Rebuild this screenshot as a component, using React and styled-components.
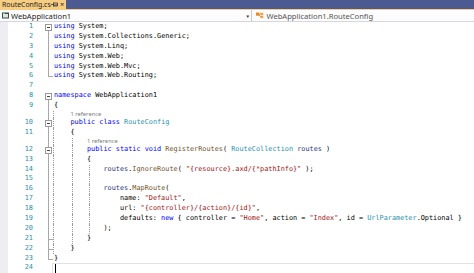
import React from "react";
import styled, { createGlobalStyle } from "styled-components";

const Global = createGlobalStyle`
  html, body { margin: 0; padding: 0; background: #ffffff; }
  body { width: 474px; height: 273px; overflow: hidden; }
`;

const Window = styled.div`
  width: 474px;
  height: 273px;
  display: flex;
  flex-direction: column;
  overflow: hidden;
  background: #ffffff;
`;

const TabBar = styled.div`
  height: 9px;
  flex: none;
  background: #4b5b91;
  display: flex;
  align-items: stretch;
`;

const Tab = styled.div`
  width: 66px;
  background: #f6cd82;
  display: flex;
  align-items: center;
  padding-left: 2px;
  box-sizing: border-box;
  font-family: "Noto Sans", "Open Sans", sans-serif;
  font-size: 6.9px;
  line-height: 9px;
  white-space: nowrap;
  color: #1e1e1e;
`;

const TabTitle = styled.span`
  flex: 1;
`;

const TabIcon = styled.span`
  width: 9px;
  display: flex;
  align-items: center;
  justify-content: center;
  font-size: 7.5px;
`;

const Accent = styled.div`
  height: 1px;
  flex: none;
  background: #f6cd82;
`;

const NavBar = styled.div`
  height: 11px;
  flex: none;
  display: flex;
  align-items: center;
  background: #fcfcfc;
  border-bottom: 1px solid #d6d6de;
  font-family: "Noto Sans", "Open Sans", sans-serif;
  font-size: 7.6px;
  white-space: nowrap;
  color: #1e1e1e;
`;

const Combo = styled.div`
  width: ${({ $w }) => $w}px;
  display: flex;
  align-items: center;
  gap: 2px;
  padding-left: 2px;
  box-sizing: border-box;
  color: ${({ $muted }) => ($muted ? "#555" : "#1e1e1e")};
`;

const ComboText = styled.span`
  flex: 1;
`;

const Arrow = styled.span`
  font-size: 4.5px;
  width: 6px;
  color: #333;
`;

const Divider = styled.div`
  width: 1px;
  height: 11px;
  background: #c8c8d0;
  margin-right: 2px;
`;

const Editor = styled.div`
  flex: 1;
  display: flex;
  flex-direction: column;
  font-family: "DejaVu Sans Mono", "Liberation Mono", monospace;
  font-size: 6.85px;
`;

const Row = styled.div`
  height: ${({ $lens }) => ($lens ? 7 : 9.9)}px;
  flex: none;
  display: flex;
  align-items: stretch;
`;

const Stripe = styled.div`
  width: 8px;
  background: #eeeef2;
`;

const LineNo = styled.div`
  width: 26px;
  text-align: right;
  color: #2b91af;
  line-height: 9.9px;
  box-sizing: border-box;
  padding-right: 1px;
`;

const Spacer = styled.div`
  width: 10px;
`;

const Fold = styled.div`
  width: 10px;
  position: relative;
`;

const FoldLine = styled.div`
  position: absolute;
  left: 4px;
  width: 1px;
  background: #a8a8a8;
  top: ${({ $from }) => $from};
  bottom: ${({ $to }) => $to};
`;

const FoldTick = styled.div`
  position: absolute;
  left: 4px;
  top: 5px;
  width: 5px;
  height: 1px;
  background: #a8a8a8;
`;

const FoldBox = styled.div`
  position: absolute;
  left: 1px;
  top: 2px;
  width: 5px;
  height: 5px;
  border: 1px solid #9a9a9a;
  background: #ffffff;
  &::after {
    content: "";
    position: absolute;
    left: 1px;
    right: 1px;
    top: 2px;
    height: 1px;
    background: #444;
  }
`;

const CHAR = 4.12;

const Code = styled.div`
  flex: 1;
  position: relative;
  white-space: pre;
  line-height: 9.9px;
  color: #000000;
  box-sizing: border-box;
  padding-left: ${({ $indent }) => $indent * CHAR}px;
  ${({ $current }) =>
    $current &&
    `
    border-top: 1px solid #e2e2e2;
    border-left: 1px solid #e2e2e2;
    margin-left: -2px;
  `}
`;

const Guide = styled.div`
  position: absolute;
  top: 0;
  bottom: 0;
  left: ${({ $x }) => $x}px;
  border-left: 1px dotted #9a9a9a;
`;

const Caret = styled.div`
  position: absolute;
  left: 2px;
  top: 0;
  width: 1px;
  height: 10px;
  background: #000;
`;

const Lens = styled.div`
  position: relative;
  flex: 1;
  font-family: "Noto Sans", "Open Sans", sans-serif;
  font-size: 5.8px;
  line-height: 7px;
  white-space: nowrap;
  color: #7a7a7a;
  padding-left: ${({ $indent }) => $indent * CHAR}px;
`;

const Tok = styled.span`
  color: ${({ $k }) =>
    ({
      kw: "#0000ff",
      type: "#2b91af",
      str: "#a31515",
      method: "#74531f",
      param: "#1f377f",
      plain: "#000000",
    })[$k]};
`;

const k = (t) => [t, "kw"];
const t = (s) => [s, "type"];
const s = (x) => [x, "str"];
const m = (x) => [x, "method"];
const p = (x) => [x, "param"];
const _ = (x) => [x, "plain"];

const rows = [
  { n: 1, fold: "boxdown", code: [k("using"), _(" System;")] },
  { n: 2, fold: "line", code: [k("using"), _(" System.Collections.Generic;")] },
  { n: 3, fold: "line", code: [k("using"), _(" System.Linq;")] },
  { n: 4, fold: "line", code: [k("using"), _(" System.Web;")] },
  { n: 5, fold: "line", code: [k("using"), _(" System.Web.Mvc;")] },
  { n: 6, fold: "endstop", code: [k("using"), _(" System.Web.Routing;")] },
  { n: 7, fold: "none", code: [] },
  { n: 8, fold: "boxdown", code: [k("namespace"), _(" WebApplication1")] },
  { n: 9, fold: "line", code: [_("{")] },
  { lens: 4, fold: "line", guides: [0] },
  { n: 10, fold: "box", guides: [0], indent: 4, code: [k("public"), _(" "), k("class"), _(" "), t("RouteConfig")] },
  { n: 11, fold: "line", guides: [0], indent: 4, code: [_("{")] },
  { lens: 8, fold: "line", guides: [0, 4] },
  {
    n: 12,
    fold: "box",
    guides: [0, 4],
    indent: 8,
    code: [
      k("public"),
      _(" "),
      k("static"),
      _(" "),
      k("void"),
      _(" "),
      m("RegisterRoutes"),
      _("( "),
      t("RouteCollection"),
      _(" "),
      p("routes"),
      _(" )"),
    ],
  },
  { n: 13, fold: "line", guides: [0, 4], indent: 8, code: [_("{")] },
  {
    n: 14,
    fold: "line",
    guides: [0, 4, 8],
    indent: 12,
    code: [p("routes"), _("."), m("IgnoreRoute"), _("( "), s('"{resource}.axd/{*pathInfo}"'), _(" );")],
  },
  { n: 15, fold: "line", guides: [0, 4, 8], code: [] },
  { n: 16, fold: "line", guides: [0, 4, 8], indent: 12, code: [p("routes"), _("."), m("MapRoute"), _("(")] },
  { n: 17, fold: "line", guides: [0, 4, 8], indent: 16, code: [_("name: "), s('"Default"'), _(",")] },
  { n: 18, fold: "line", guides: [0, 4, 8], indent: 16, code: [_("url: "), s('"{controller}/{action}/{id}"'), _(",")] },
  {
    n: 19,
    fold: "line",
    guides: [0, 4, 8],
    indent: 16,
    code: [
      _("defaults: "),
      k("new"),
      _(" { controller = "),
      s('"Home"'),
      _(", action = "),
      s('"Index"'),
      _(", id = "),
      t("UrlParameter"),
      _(".Optional }"),
    ],
  },
  { n: 20, fold: "line", guides: [0, 4, 8], indent: 12, code: [_(");")] },
  { n: 21, fold: "end", guides: [0, 4], indent: 8, code: [_("}")] },
  { n: 22, fold: "end", guides: [0], indent: 4, code: [_("}")] },
  { n: 23, fold: "endstop", code: [_("}")] },
  { n: 24, fold: "none", code: [], current: true },
];

const FoldMark = ({ kind }) => {
  switch (kind) {
    case "boxdown":
      return (
        <>
          <FoldLine $from="8px" $to="0" />
          <FoldBox />
        </>
      );
    case "box":
      return (
        <>
          <FoldLine $from="0" $to="0" />
          <FoldBox />
        </>
      );
    case "line":
      return <FoldLine $from="0" $to="0" />;
    case "end":
      return (
        <>
          <FoldLine $from="0" $to="0" />
          <FoldTick />
        </>
      );
    case "endstop":
      return (
        <>
          <FoldLine $from="0" $to="4px" />
          <FoldTick />
        </>
      );
    default:
      return null;
  }
};

// guide x relative to the code column's left edge (not the padded text)
const guideX = (col) => (col === 0 ? -1.5 : col * CHAR + 2);

const PinIcon = () => (
  <svg width="7" height="5" viewBox="0 0 7 5">
    <path d="M0 2.5h2.5M2.5 0.5v4M2.5 1h4v3h-4M2.5 3h4" stroke="#333" strokeWidth="0.8" fill="none" />
  </svg>
);

const ProjectIcon = () => (
  <svg width="7" height="7" viewBox="0 0 7 7">
    <rect x="0" y="0.5" width="7" height="6" fill="#3c4b4b" />
    <rect x="1" y="2" width="5" height="3.5" fill="#d9e8e4" />
    <rect x="1" y="1" width="2" height="1" fill="#7fbf7f" />
  </svg>
);

const ClassIcon = () => (
  <svg width="8" height="7" viewBox="0 0 8 7">
    <path d="M2 2L5 2M2 2L5 5" stroke="#a06020" strokeWidth="0.7" />
    <rect x="0" y="0.5" width="3.2" height="3.2" fill="#e68a1f" />
    <rect x="4.5" y="0.8" width="2.8" height="2.4" fill="#f0a040" />
    <rect x="4.5" y="3.8" width="2.8" height="2.4" fill="#f0a040" />
  </svg>
);

export default function App() {
  return (
    <Window>
      <Global />
      <TabBar>
        <Tab>
          <TabTitle>RouteConfig.cs</TabTitle>
          <TabIcon>
            <PinIcon />
          </TabIcon>
          <TabIcon>×</TabIcon>
        </Tab>
      </TabBar>
      <Accent />
      <NavBar>
        <Combo $w={252}>
          <ProjectIcon />
          <ComboText>WebApplication1</ComboText>
          <Arrow>▼</Arrow>
        </Combo>
        <Divider />
        <Combo $w={220} $muted>
          <ClassIcon />
          <ComboText>WebApplication1.RouteConfig</ComboText>
        </Combo>
      </NavBar>
      <Editor>
        {rows.map((r, i) => (
          <Row key={i} $lens={!!r.lens}>
            <Stripe />
            <LineNo>{r.n || ""}</LineNo>
            <Spacer />
            <Fold>
              <FoldMark kind={r.fold} />
            </Fold>
            {r.lens ? (
              <Lens $indent={r.lens}>
                {(r.guides || []).map((g) => (
                  <Guide key={g} $x={guideX(g)} />
                ))}
                1 reference
              </Lens>
            ) : (
              <Code $current={r.current} $indent={r.indent || 0}>
                {(r.guides || []).map((g) => (
                  <Guide key={g} $x={guideX(g)} />
                ))}
                {r.code.map(([text, kind], j) => (
                  <Tok key={j} $k={kind}>
                    {text}
                  </Tok>
                ))}
                {r.current && <Caret />}
              </Code>
            )}
          </Row>
        ))}
      </Editor>
    </Window>
  );
}
